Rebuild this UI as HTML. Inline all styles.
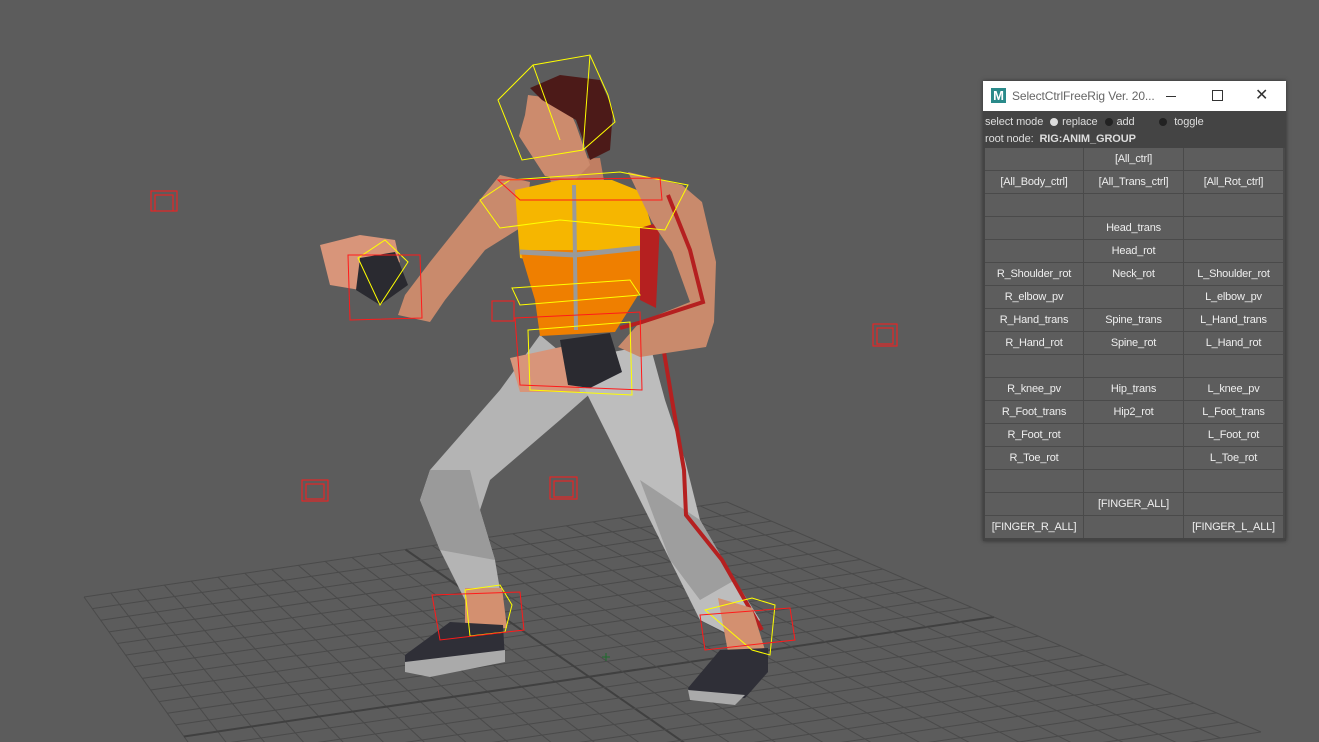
<!DOCTYPE html>
<html><head><meta charset="utf-8"><style>
body{margin:0;width:1319px;height:742px;overflow:hidden;background:#5c5c5c;font-family:"Liberation Sans",sans-serif;position:relative}
#v{position:absolute;left:0;top:0}
.pan{position:absolute;left:983px;top:81px;width:303px;height:460px;background:#444;box-shadow:0 0 4px rgba(0,0,0,.5)}
.tb{height:30px;background:#fff;position:relative;color:#666;font-size:12px}
.tb .t{position:absolute;left:29px;top:8px;letter-spacing:-.1px}
.ic{position:absolute;left:8px;top:7px;width:15px;height:15px;background:#2a8a8a;color:#fff;font:bold 13px/15px "Liberation Sans";text-align:center}
.ln{color:#ddd;font-size:11px;position:absolute;left:2px;letter-spacing:-.1px}
.dot{display:inline-block;width:8px;height:8px;border-radius:50%;background:#222;vertical-align:-1px;margin:0 4px}
.g{position:absolute;left:2px;top:67px;width:300px;display:grid;grid-template-columns:98px 99px 99px;gap:1px;background:#4a4a4a}
.g div{height:22px;background:#5d5d5d;color:#eee;font-size:11px;line-height:22px;text-align:center;letter-spacing:-.2px}
</style></head><body>
<svg id="v" width="1319" height="742"><g id="grid" stroke="#4a4a4a" stroke-width="1"></g>
<polygon points="540,335 600,385 560,420 490,480 480,510 495,560 500,590 465,600 440,550 420,500 430,470 500,390" fill="#b4b4b4"/>
<polygon points="440,550 420,500 430,470 470,470 480,510 495,560" fill="#9a9a9a"/>
<polygon points="570,360 650,345 665,400 685,460 700,520 735,580 760,620 740,640 700,620 660,540 630,480 600,420" fill="#bdbdbd"/>
<polygon points="640,480 700,520 735,580 700,600 670,560" fill="#9e9e9e"/>
<polyline points="662,340 672,400 684,470 686,515 722,560 762,630" fill="none" stroke="#b52020" stroke-width="4"/>
<polygon points="465,588 502,588 507,628 465,630" fill="#d39070"/>
<polygon points="718,598 752,608 765,650 728,652" fill="#d39070"/>
<polygon points="405,655 450,622 503,625 505,660 430,672 405,668" fill="#2f2f37"/>
<polygon points="405,662 505,650 505,662 430,677 405,672" fill="#aaa"/>
<polygon points="688,688 720,650 768,648 768,672 745,698 692,700" fill="#2f2f37"/>
<polygon points="688,690 745,695 735,705 690,700" fill="#aaa"/>
<polygon points="500,175 530,182 525,225 485,250 445,300 430,322 398,315 405,295 430,262 470,212" fill="#c98a6c"/>
<polygon points="320,245 360,235 395,240 400,262 360,290 330,285" fill="#d8957a"/>
<polygon points="360,258 395,252 408,285 380,305 356,290" fill="#2a2a30"/>
<polygon points="545,160 600,158 606,192 555,198" fill="#c07e62"/>
<polygon points="515,190 560,180 612,180 642,192 652,228 632,262 575,268 520,258" fill="#f6b600"/>
<polygon points="520,250 642,250 640,292 615,332 540,336 535,300" fill="#ef7f00"/>
<line x1="574" y1="185" x2="576" y2="330" stroke="#9a9a9a" stroke-width="4"/>
<polyline points="520,252 575,255 640,248" fill="none" stroke="#9a9a9a" stroke-width="5"/>
<polygon points="640,228 660,222 656,308 640,300" fill="#b52020"/>
<polygon points="628,172 682,185 702,202 716,262 714,322 706,347 640,357 618,347 640,322 690,302 672,252 652,222" fill="#c98a6c"/>
<polyline points="668,195 690,250 703,302 642,322 620,328" fill="none" stroke="#b52020" stroke-width="4"/>
<polygon points="510,358 570,345 580,392 520,392" fill="#d8957a"/>
<polygon points="560,340 610,333 622,372 590,388 568,385" fill="#2a2a30"/>
<polygon points="528,95 565,100 576,125 590,165 575,180 545,176 528,150 519,136 525,115" fill="#cc8b6d"/>
<polygon points="530,88 560,75 600,80 613,110 610,150 590,160 576,120 542,100" fill="#4c1a18"/>
<g fill="none" stroke="#ffff00" stroke-width="1">
<polygon points="498,100 533,65 590,55 608,95 615,122 583,150 522,160"/>
<line x1="533" y1="65" x2="560" y2="140"/><line x1="590" y1="55" x2="583" y2="150"/>
<polygon points="480,200 510,180 620,172 688,185 665,230 560,220 500,228"/>
<polygon points="512,288 630,280 640,295 520,305"/>
<polygon points="528,330 630,322 632,395 530,390"/>
<polygon points="358,258 385,240 408,262 380,305"/>
<polygon points="465,590 500,585 512,605 505,632 470,636"/>
<polygon points="705,610 752,598 775,605 770,655 752,650"/>
</g>
<g fill="none" stroke="#ff1a1a" stroke-width="1">
<polygon points="498,180 660,178 662,200 520,200"/>
<polygon points="348,255 420,255 422,318 350,320"/>
<polygon points="515,318 640,312 642,390 520,385"/>
<polygon points="432,595 520,592 524,630 440,640"/>
<polygon points="700,615 790,608 795,640 705,650"/>
<rect x="151" y="191" width="26" height="20"/><rect x="155" y="195" width="18" height="16"/>
<rect x="302" y="480" width="26" height="21"/><rect x="306" y="484" width="18" height="15"/>
<rect x="550" y="477" width="27" height="22"/><rect x="554" y="481" width="19" height="16"/>
<rect x="873" y="324" width="24" height="22"/><rect x="877" y="328" width="16" height="16"/>
<rect x="492" y="301" width="22" height="20"/>
</g>
<line x1="602" y1="657" x2="610" y2="657" stroke="#1d6b2b"/><line x1="606" y1="653" x2="606" y2="661" stroke="#1d6b2b"/>
</svg>
<div class="pan">
<div class="tb"><div class="ic">M</div><div class="t">SelectCtrlFreeRig Ver. 20...</div>
<div style="position:absolute;left:183px;top:15px;width:10px;height:1px;background:#333"></div>
<div style="position:absolute;left:229px;top:9px;width:9px;height:9px;border:1px solid #333"></div>
<div style="position:absolute;left:272px;top:4px;font-size:16px;color:#333">✕</div></div>
<div class="ln" style="top:35px">select mode <span class="dot" style="background:#ddd"></span>replace <span class="dot"></span>add &nbsp;&nbsp;&nbsp;&nbsp;&nbsp;&nbsp;<span class="dot"></span> toggle</div>
<div class="ln" style="top:52px">root node: &nbsp;<b>RIG:ANIM_GROUP</b></div>
<div class="g">
<div></div><div>[All_ctrl]</div><div></div>
<div>[All_Body_ctrl]</div><div>[All_Trans_ctrl]</div><div>[All_Rot_ctrl]</div>
<div></div><div></div><div></div>
<div></div><div>Head_trans</div><div></div>
<div></div><div>Head_rot</div><div></div>
<div>R_Shoulder_rot</div><div>Neck_rot</div><div>L_Shoulder_rot</div>
<div>R_elbow_pv</div><div></div><div>L_elbow_pv</div>
<div>R_Hand_trans</div><div>Spine_trans</div><div>L_Hand_trans</div>
<div>R_Hand_rot</div><div>Spine_rot</div><div>L_Hand_rot</div>
<div></div><div></div><div></div>
<div>R_knee_pv</div><div>Hip_trans</div><div>L_knee_pv</div>
<div>R_Foot_trans</div><div>Hip2_rot</div><div>L_Foot_trans</div>
<div>R_Foot_rot</div><div></div><div>L_Foot_rot</div>
<div>R_Toe_rot</div><div></div><div>L_Toe_rot</div>
<div></div><div></div><div></div>
<div></div><div>[FINGER_ALL]</div><div></div>
<div>[FINGER_R_ALL]</div><div></div><div>[FINGER_L_ALL]</div>
</div></div>
<script>
var A=[84,597],B=[727,502],C=[1261,732],D=[284,876],N=24,g=document.getElementById('grid'),s='';
function L(p,q,t){return [p[0]+(q[0]-p[0])*t,p[1]+(q[1]-p[1])*t]}
for(var i=0;i<=N;i++){var t=i/N,p=L(A,B,t),q=L(D,C,t),r=L(A,D,t),u=L(B,C,t),w=(i==N/2)?' stroke="#404040" stroke-width="2"':'';
s+='<line'+w+' x1="'+p[0]+'" y1="'+p[1]+'" x2="'+q[0]+'" y2="'+q[1]+'"/><line'+w+' x1="'+r[0]+'" y1="'+r[1]+'" x2="'+u[0]+'" y2="'+u[1]+'"/>';}
g.innerHTML=s;
</script>
</body></html>
